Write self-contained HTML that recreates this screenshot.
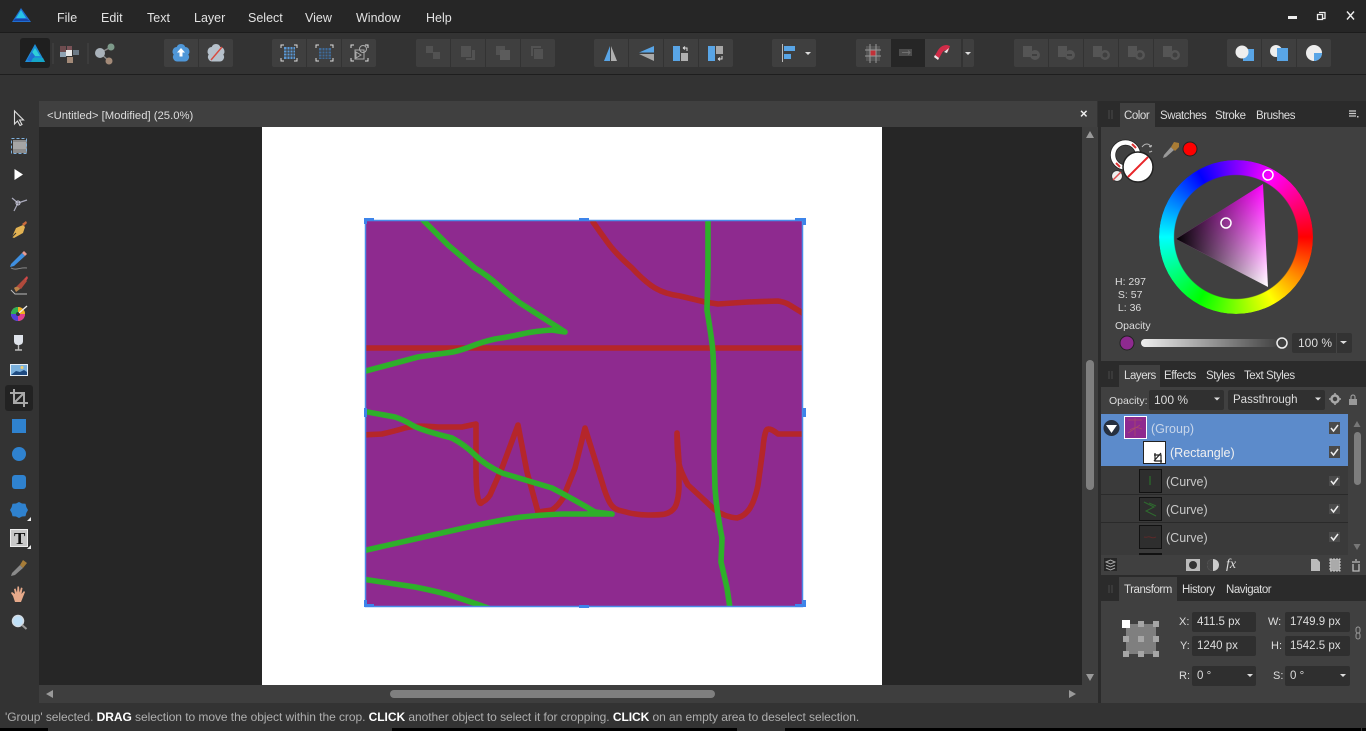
<!DOCTYPE html>
<html><head><meta charset="utf-8"><title>Affinity</title>
<style>
*{box-sizing:border-box}
html,body{margin:0;padding:0;width:1366px;height:731px;overflow:hidden;background:#333;font-family:"Liberation Sans",sans-serif}
.b{position:absolute}
.t{position:absolute;white-space:nowrap;font-size:12px;line-height:14px;color:#ddd}
.p{font-size:11.5px;letter-spacing:-.45px;margin-top:1px}
.m{font-size:12.5px;color:#e2e2e2;top:11px}
.g{position:absolute;top:39px;height:28px;background:#3f3f3f;border-radius:2px}
.f{position:absolute;background:#2f2f2f;border-radius:2px;height:20px;color:#ddd;font-size:12px;line-height:20px;padding-left:5px;white-space:nowrap}
.s{font-size:11.5px;line-height:21px}
svg{position:absolute;left:0;top:0}
</style></head><body>
<div class="b" style="left:0;top:0;width:1366px;height:33px;background:#262626;border-bottom:1px solid #1c1c1c"></div>
<div class="b" style="left:0;top:33px;width:1366px;height:42px;background:#333;border-bottom:1px solid #1e1e1e"></div>
<div class="b" style="left:0;top:75px;width:1366px;height:26px;background:#333"></div>

<div class="t m" style="left:57px">File</div>
<div class="t m" style="left:101px">Edit</div>
<div class="t m" style="left:147px">Text</div>
<div class="t m" style="left:194px">Layer</div>
<div class="t m" style="left:248px">Select</div>
<div class="t m" style="left:305px">View</div>
<div class="t m" style="left:356px">Window</div>
<div class="t m" style="left:426px">Help</div>

<div class="b" style="left:20px;top:38px;width:30px;height:30px;background:#1f1f1f;border-radius:3px"></div>
<div class="g" style="left:164px;width:69px"></div>
<div class="g" style="left:272px;width:104px"></div>
<div class="g" style="left:416px;width:139px"></div>
<div class="g" style="left:594px;width:139px"></div>
<div class="g" style="left:772px;width:44px"></div>
<div class="g" style="left:856px;width:118px"></div>
<div class="b" style="left:891px;top:39px;width:34px;height:28px;background:#262626"></div>
<div class="g" style="left:1014px;width:174px"></div>
<div class="g" style="left:1227px;width:104px"></div>

<!-- document tab -->
<div class="b" style="left:39px;top:101px;width:1058px;height:26px;background:#404040"></div>
<div class="t" style="left:47px;top:109px;font-size:11.3px;color:#ddd">&lt;Untitled&gt; [Modified] (25.0%)</div>
<div class="t" style="left:1080px;top:107px;font-size:13px;font-weight:bold;color:#eee">×</div>

<!-- canvas -->
<div class="b" style="left:39px;top:127px;width:1043px;height:558px;background:#262626"></div>
<div class="b" style="left:262px;top:127px;width:620px;height:558px;background:#fff"></div>
<div class="b" style="left:1082px;top:127px;width:16px;height:558px;background:#3e3e3e"></div>
<div class="b" style="left:1086px;top:360px;width:8px;height:130px;background:#7f7f7f;border-radius:4px"></div>
<div class="b" style="left:39px;top:685px;width:1059px;height:18px;background:#3e3e3e"></div>
<div class="b" style="left:390px;top:690px;width:325px;height:8px;background:#7f7f7f;border-radius:4px"></div>
<div class="b" style="left:1098px;top:101px;width:3px;height:602px;background:#2b2b2b"></div>

<!-- artwork -->
<svg width="1366" height="731" viewBox="0 0 1366 731" fill="none">
<defs><clipPath id="c"><rect x="366" y="221" width="436" height="385"/></clipPath>
<filter id="s" x="-5%" y="-5%" width="110%" height="110%"><feGaussianBlur stdDeviation=".3"/></filter></defs>
<rect x="366" y="221" width="436" height="385" fill="#8e2a8f"/>
<g clip-path="url(#c)"><g filter="url(#s)" stroke-width="5.6" stroke-linecap="round" stroke-linejoin="round">
<g stroke="#b5252a">
<path d="M362 348H806"/>
<path d="M593 222Q600 232 608 243T632 268Q645 282 655 288T680 296L705 302 718 304 748 302 778 301Q784 302 788 304L806 315"/>
<path d="M362 435L382 434Q395 431 405 428T438 427H462L476 424 476 465Q476 490 478 498T482 502Q486 501 490 495L502 468 518 425 527 472 538 512 552 510Q558 506 563 498L575 468 585 428 602 482Q606 496 610 503T622 511Q635 515 648 515T665 514Q672 512 675 507T679 488V462L677 433Q677 447 678 458T688 485L715 510Q725 517 737 518 745 516 750 508T758 485L763 448Q764 436 766 431T778 434H806"/>
</g>
<g stroke="#2fb02c">
<path d="M423 220L448 245 475 268Q488 276 498 285T520 303L565 332 552 330Q535 331 522 334T495 339Q482 342 472 346T453 352L418 357 392 364 362 372"/>
<path d="M708 220V267L707 310Q710 328 712 343T714 397V448L715 488Q716 502 718 515T722 538L721 562Q724 575 727 588L730 608"/>
<path d="M362 411L395 417Q404 420 412 425T452 438Q465 445 475 455T502 473L552 488Q575 500 595 512L612 514H562Q540 515 522 517T455 530L362 551"/>
<path d="M362 579L415 587Q430 590 442 593T488 608"/>
</g>
</g></g>
<rect x="365.5" y="220.5" width="437" height="386" stroke="#4a8ce8" stroke-width="1.5"/>
<g fill="#3d84ea">
<path d="M364 218h10v3h-7v3h-3zM795 218h11v7h-3v-4h-8zM364 600h3v4h7v3h-10zM803 600h3v7h-11v-3h8z"/>
<rect x="579" y="218" width="10" height="3"/><rect x="579" y="605" width="10" height="3"/>
<rect x="364" y="408" width="3" height="9"/><rect x="803" y="408" width="3" height="9"/>
</g>

<!-- scroll arrows -->
<path d="M1090 131l4 7h-8zM1090 681l4-7h-8zM46 694l7-4v8zM1076 694l-7-4v8z" fill="#9a9a9a"/>

<!-- logo -->
<path d="M21 8L31 22H12Z" fill="#1f6fd0"/><path d="M21 10L26 18H16Z" fill="#27c3e6"/><path d="M15 19L27 19 30 21H13Z" fill="#1745a8"/>
<path d="M35 44L45 62H25Z" fill="#1d8fd8"/><path d="M35 48L40 56H30Z" fill="#2fd0d8"/><path d="M27 60L32 52 35 56 31 62Z" fill="#1f6ed0"/><path d="M33 58H43L45 62H31Z" fill="#15a6c8"/>
<!-- window controls -->
<rect x="1288" y="16" width="9" height="3" fill="#eee"/>
<path d="M1319 12.5h6v6h-2.5M1317.500 14.500h5v5h-5z" stroke="#eee" stroke-width="1.3"/>
<path d="M1347 11.500l7 8M1354 11.500l-7 8" stroke="#eee" stroke-width="1.4"/>

<!-- persona icons -->
<g>
<rect x="60" y="46" width="6" height="6" fill="#6d4c4f"/><rect x="67" y="46" width="5" height="6" fill="#7a5257"/><rect x="60" y="52" width="6" height="5" fill="#8fa3b3"/><rect x="66" y="50" width="6" height="6" fill="#e8e8e8"/><rect x="73" y="50" width="6" height="5" fill="#6c7a86"/><rect x="67" y="57" width="6" height="6" fill="#a38a78"/>
<path d="M100 53L111 47M100 53L109 61" stroke="#8a8a8a" stroke-width="1.4"/>
<circle cx="100" cy="53" r="5" fill="#a9b2ba"/><circle cx="111" cy="47" r="3.500" fill="#7d9a8a"/><circle cx="109" cy="61" r="3.500" fill="#a38a78"/>
</g>
<line x1="53" y1="43" x2="53" y2="64" stroke="#444"/><line x1="88" y1="43" x2="88" y2="64" stroke="#444"/>

<!-- flower icons -->
<g>
<path d="M181 44a4.500 4.500 0 0 1 4.300 3 4.500 4.500 0 0 1 3 7.500 4.500 4.500 0 0 1-4 7h-6.600a4.500 4.500 0 0 1-4-7 4.500 4.500 0 0 1 3-7.500 4.500 4.500 0 0 1 4.300-3z" fill="#4f97d8"/>
<path d="M181 48l4 4.500h-2.500v4h-3v-4h-2.500z" fill="#fff"/>
<path d="M216 44a4.500 4.500 0 0 1 4.300 3 4.500 4.500 0 0 1 3 7.500 4.500 4.500 0 0 1-4 7h-6.600a4.500 4.500 0 0 1-4-7 4.500 4.500 0 0 1 3-7.500 4.500 4.500 0 0 1 4.300-3z" fill="#b6c1cb"/>
<path d="M211 60l11-13" stroke="#d84a3e" stroke-width="1.400"/>
</g>
<g stroke="#333"><line x1="198.500" y1="39" x2="198.500" y2="67"/><line x1="306.500" y1="39" x2="306.500" y2="67"/><line x1="341.500" y1="39" x2="341.500" y2="67"/>
<line x1="450.500" y1="39" x2="450.500" y2="67"/><line x1="485.500" y1="39" x2="485.500" y2="67"/><line x1="520.500" y1="39" x2="520.500" y2="67"/>
<line x1="628.500" y1="39" x2="628.500" y2="67"/><line x1="663.500" y1="39" x2="663.500" y2="67"/><line x1="698.500" y1="39" x2="698.500" y2="67"/>
<line x1="961.500" y1="39" x2="961.500" y2="67"/>
<line x1="1048.500" y1="39" x2="1048.500" y2="67"/><line x1="1083.500" y1="39" x2="1083.500" y2="67"/><line x1="1118.500" y1="39" x2="1118.500" y2="67"/><line x1="1153.500" y1="39" x2="1153.500" y2="67"/>
<line x1="1261.500" y1="39" x2="1261.500" y2="67"/><line x1="1296.500" y1="39" x2="1296.500" y2="67"/></g>

<!-- selection icons -->
<g stroke="#ddd" stroke-width="1">
<path d="M281 48v-3h3M294 45h3v3M297 58v3h-3M284 61h-3v-3M316 48v-3h3M330 45h3v3M333 58v3h-3M319 61h-3v-3M351 48v-3h3M365 45h3v3M368 58v3h-3M354 61h-3v-3"/>
</g>
<rect x="284" y="47" width="11" height="12" fill="#5a9ad8"/>
<g stroke="#3f3f3f"><path d="M287 47v12M290 47v12M293 47v12M284 50h11M284 53h11M284 56h11"/></g>
<rect x="319" y="48" width="12" height="11" fill="#3f6b9a"/>
<g stroke="#3f3f3f"><path d="M322 48v11M325 48v11M328 48v11M319 51h12M319 54h12M319 57h12"/></g>
<g stroke="#aaa"><rect x="355" y="50" width="9" height="9"/><circle cx="363" cy="49" r="3.500"/><path d="M356 52l5 3-5 3z"/></g>

<!-- disabled arrange -->
<g fill="#525252">
<rect x="426" y="46" width="7" height="7"/><rect x="433" y="52" width="7" height="7"/>
<rect x="461" y="46" width="10" height="11"/><path d="M472 50h3v10h-9v-2h6z"/>
<rect x="496" y="46" width="9" height="9"/><rect x="500" y="50" width="10" height="10" fill="#5c5c5c"/>
<path d="M531 46h10v2h-8v8h-2z"/><rect x="534" y="49" width="9" height="10"/>
</g>

<!-- flip icons -->
<path d="M610 46L604 61H610Z" fill="#59a5e6"/><path d="M611 46L617 61H611Z" fill="#b0b0b0"/>
<path d="M654 46L639 52.500H654Z" fill="#59a5e6"/><path d="M654 54L639 54 654 61Z" fill="#a8a8a8"/>
<rect x="673" y="46" width="7" height="15" fill="#59a5e6"/><rect x="681" y="53" width="7" height="8" fill="#b0b0b0"/><path d="M683 48h4v3M683 48l2-1.500M683 48l2 1.500" stroke="#ddd"/>
<rect x="708" y="46" width="7" height="15" fill="#59a5e6"/><rect x="716" y="46" width="7" height="8" fill="#a8a8a8"/><path d="M722 56v3h-4M718 59l2-1.500M718 59l2 1.500" stroke="#ddd"/>

<!-- align -->
<path d="M782.500 44v18" stroke="#bbb"/><rect x="784" y="46" width="11" height="5" fill="#59a5e6"/><rect x="784" y="54" width="7" height="5" fill="#59a5e6"/>
<path d="M805 52h6l-3 3zM965 52h6l-3 3z" fill="#ddd"/>

<!-- snap -->
<g><rect x="866" y="46" width="14" height="15" fill="#555"/><rect x="870" y="50" width="6" height="6" fill="#c23037"/><path d="M870 44v19M876 44v19M865 50h16M865 56h16" stroke="#999"/></g>
<path d="M899 49h13v7h-13z" fill="#4d4d4d"/><path d="M902 52.500h8M908 50.500l2 2-2 2" stroke="#707070"/>
<path d="M947 45c-5 0-8 3-10 7l-3 5 4 3 4-7c1-2 3-3 5-3l1 2 2-6z" fill="#d12c48"/><path d="M949 48l-2 5-3-1zM935 55l4 3-1 2-4-3z" fill="#e8e8e8"/>
<rect x="962" y="39" width="1" height="28" fill="#333"/>

<!-- boolean disabled -->
<g fill="#555"><rect x="1023" y="46" width="9" height="11"/><circle cx="1035" cy="55" r="5"/><rect x="1058" y="46" width="9" height="11"/><circle cx="1070" cy="55" r="5"/><rect x="1093" y="46" width="9" height="11"/><circle cx="1105" cy="55" r="5"/><rect x="1128" y="46" width="9" height="11"/><circle cx="1140" cy="55" r="5"/><rect x="1163" y="46" width="9" height="11"/><circle cx="1175" cy="55" r="5"/></g>
<g fill="#3f3f3f"><rect x="1032" y="54" width="5" height="2"/><rect x="1067" y="54" width="5" height="2"/><circle cx="1105" cy="55" r="2.500"/><circle cx="1140" cy="55" r="2.500"/><circle cx="1175" cy="55" r="2.500"/></g>

<!-- last group -->
<rect x="1243" y="49" width="11" height="12" fill="#59a5e6"/><circle cx="1242" cy="52" r="6.500" fill="#eee"/>
<circle cx="1276" cy="51" r="6" fill="#eee"/><rect x="1277" y="48" width="11" height="13" fill="#59a5e6"/>
<circle cx="1314" cy="53" r="8" fill="#eee"/><path d="M1314 53h8a8 8 0 0 1-8 8z" fill="#59a5e6"/>

<!-- tools -->
<path d="M14.500 111l0 13 3-3 2.500 4.500 2-1-2.500-4.500h4z" stroke="#ddd" stroke-width="1.100" fill="#333"/>
<rect x="13" y="140" width="14" height="13" fill="#8b8b8b"/><rect x="11.500" y="138.500" width="15" height="15" stroke="#7fb0dc" stroke-dasharray="3 2"/><rect x="13" y="142" width="13" height="7" fill="#a5a5a5"/>
<path d="M14.500 169l0 11 8.500-5.500z" fill="#fff"/>
<path d="M18 203l-6-5M18 203l9-3M18 203l-4 8" stroke="#aab" stroke-width="1.200"/><circle cx="18" cy="203" r="2" stroke="#ccd"/>
<path d="M12 237l4-9 7-3 2 2-2 6-9 5z" fill="#e2b252"/><path d="M22 224l4-3 1 2-3 3z" fill="#c96a3c"/><path d="M11 238l5-5" stroke="#333"/>
<path d="M11 264l11-11 3 3-11 10-4 1z" fill="#3f8fe0"/><path d="M22 253l2-2 3 3-2 2z" fill="#e89a90"/><path d="M11 268c5 3 9-1 16 0" stroke="#888"/>
<path d="M16 287l8-8 3 2-6 8z" fill="#b04a3c"/><path d="M14 288c2-2 5-1 6 1l-4 3z" fill="#b9834a"/><path d="M11 290l4 4h12" stroke="#bbb"/><path d="M24 279l3-3 1 2-2 3z" fill="#d04848"/>
<circle cx="18" cy="314" r="7" fill="#c9a"/><path d="M18 314V307A7 7 0 0 1 25 314Z" fill="#f0b020"/><path d="M18 314H25A7 7 0 0 1 18 321Z" fill="#e0408c"/><path d="M18 314V321A7 7 0 0 1 11 314Z" fill="#5040d8"/><path d="M18 314H11A7 7 0 0 1 18 307Z" fill="#30b050"/><circle cx="18" cy="314" r="2" fill="#333"/><path d="M19 313l8-7" stroke="#eee" stroke-width="1.300"/>
<path d="M14 335h9v6c0 3-2 4-4.500 4s-4.500-1-4.500-4z" fill="#dfe3ea"/><path d="M18.500 345v5M15 350h7" stroke="#bbb" stroke-width="1.400"/>
<rect x="10" y="364" width="18" height="12" fill="#e5eef6"/><rect x="11" y="365" width="16" height="10" fill="#7ab0dc"/><path d="M11 375l5-4 4 1 4-2 3 2v3z" fill="#1e4a80"/><circle cx="22" cy="367.500" r="1.500" fill="#f2d070"/>
<rect x="5" y="385" width="28" height="26" rx="3" fill="#222"/>
<path d="M14 389v14h14M10 393h14v14M24 393L14 403" stroke="#a8a8a8" stroke-width="2"/>
<rect x="12" y="419" width="14" height="14" fill="#2f82cf"/>
<circle cx="19" cy="454" r="7" fill="#2f82cf"/>
<rect x="12" y="475" width="14" height="14" rx="3" fill="#2f82cf"/>
<path d="M19 502l3 1.500 3.500.3.800 3.200 1.700 3-1.700 3-.8 3.200-3.500.3-3 1.500-3-1.500-3.500-.3-.8-3.200-1.700-3 1.700-3 .8-3.200 3.500-.3z" fill="#2f82cf"/>
<path d="M31 517v4h-4zM31 545v4h-4z" fill="#eee"/>
<rect x="10.500" y="529.500" width="17" height="17" fill="#c8c8c8" stroke="#eee"/>
<path d="M12 573l8-8 3 3-8 7-4 1z" fill="#8a8a8a"/><path d="M20 565l3-5 4 3-4 5z" fill="#a67c38"/>
<g transform="translate(0 4)"><path d="M13 592l-2-3 1-1 3 2-1-5 1.500-.5 1.500 4 .5-6h1.500l.5 6 1.500-5 1.500.5-1 6 2.500-3 1 1-2 5-2 5h-6z" fill="#e6a98a"/></g>
<circle cx="18" cy="621" r="5.500" fill="#bfe0f8" stroke="#d4dce4" stroke-width="1.500"/><path d="M22 625l4.500 4" stroke="#999" stroke-width="2"/>
</svg>

<div class="t" style="left:14px;top:530px;width:10px;font:bold 17px/17px 'Liberation Serif',serif;color:#111">T</div>

<!-- right panels -->
<div class="b" style="left:1101px;top:101px;width:265px;height:26px;background:#2b2b2b"></div>
<div class="b" style="left:1120px;top:103px;width:35px;height:24px;background:#404040"></div>
<div class="b" style="left:1101px;top:127px;width:265px;height:234px;background:#404040"></div>
<div class="b" style="left:1101px;top:361px;width:265px;height:3px;background:#2b2b2b"></div>
<div class="t p" style="left:1124px;top:108px">Color</div>
<div class="t p" style="left:1160px;top:108px">Swatches</div>
<div class="t p" style="left:1215px;top:108px">Stroke</div>
<div class="t p" style="left:1256px;top:108px">Brushes</div>

<!-- wheel -->
<div class="b" style="left:1159px;top:160px;width:154px;height:154px;border-radius:50%;background:conic-gradient(from 90deg,#f00,#ff0,#0f0,#0ff,#00f,#f0f,#f00);-webkit-mask:radial-gradient(circle,transparent 61.500px,#000 62.500px);mask:radial-gradient(circle,transparent 61.500px,#000 62.500px)"></div>

<div class="t" style="left:1115px;top:276px;font-size:10.500px;line-height:13px;color:#ddd">H: 297<br>&nbsp;S: 57<br>&nbsp;L: 36</div>
<div class="t" style="left:1115px;top:319px;font-size:10.500px;color:#ddd">Opacity</div>
<div class="f" style="left:1292px;top:333px;width:60px;padding-left:6px;background:#333">100 %</div>
<div class="b" style="left:1336px;top:333px;width:1px;height:20px;background:#444"></div>

<svg width="1366" height="731" viewBox="0 0 1366 731" fill="none">
<defs>
<linearGradient id="w" gradientUnits="userSpaceOnUse" x1="1263" y1="184" x2="1268" y2="287"><stop offset="0" stop-color="#f0f"/><stop offset="1" stop-color="#fff"/></linearGradient>
<linearGradient id="k" gradientUnits="userSpaceOnUse" x1="1176" y1="239" x2="1265" y2="236"><stop offset="0" stop-color="#000"/><stop offset="1" stop-color="#000" stop-opacity="0"/></linearGradient>
<linearGradient id="op" x1="0" x2="1"><stop offset="0" stop-color="#eee"/><stop offset="1" stop-color="#444"/></linearGradient>
</defs>
<path d="M1263 184L1176 239 1268 287Z" fill="url(#w)"/><path d="M1263 184L1176 239 1268 287Z" fill="url(#k)"/>
<circle cx="1268" cy="175" r="5" stroke="#fff" stroke-width="1.500"/>
<circle cx="1226" cy="223" r="5" stroke="#fff" stroke-width="1.500"/>

<!-- color swatch -->
<circle cx="1125.500" cy="155" r="12.500" stroke="#222" stroke-width="6"/><circle cx="1125.500" cy="155" r="12.500" stroke="#fff" stroke-width="4.500"/>
<path d="M1132 144l4 4M1116 163l4 4" stroke="#d33" stroke-width="2"/>
<circle cx="1138" cy="167" r="15" fill="#fff" stroke="#222" stroke-width="1.500"/><path d="M1128 177l20-20" stroke="#e8262a" stroke-width="2"/>
<circle cx="1117" cy="176" r="5.500" fill="#eee" stroke="#333"/><path d="M1113 180l8-8" stroke="#e05050" stroke-width="1.500"/>
<path d="M1142 147c3-4 7-4 9 0M1151 147l-2-.5M1151 147l.5-2M1152 151c-1 1-2 1-3 1" stroke="#bbb"/>
<path d="M1164 155l7-8 3 3-8 7-3 1z" fill="#999"/><path d="M1171 147l3-5 5 1 0 4-4 4z" fill="#a97c35"/>
<circle cx="1190" cy="149" r="7" fill="#f00" stroke="#222"/>

<!-- opacity -->
<rect x="1141" y="339" width="136" height="8" rx="4" fill="url(#op)"/>
<circle cx="1282" cy="343" r="5" fill="#404040" stroke="#eee" stroke-width="1.500"/>
<circle cx="1127" cy="343" r="7" fill="#8e2a8f" stroke="#222"/>
<path d="M1340 341h7l-3.500 3z" fill="#ddd"/>
<path d="M1349 111h7M1349 113.500h7M1349 116h7" stroke="#ccc" stroke-width="1.200"/><rect x="1357" y="116" width="1.500" height="1.500" fill="#ccc"/>
<g stroke="#4a4a4a"><path d="M1109 110v9M1112 110v9"/></g>
</svg>

<!-- layers -->
<div class="b" style="left:1101px;top:364px;width:265px;height:23px;background:#2b2b2b"></div>
<div class="b" style="left:1119px;top:365px;width:41px;height:22px;background:#404040"></div>
<div class="t p" style="left:1124px;top:368px">Layers</div>
<div class="t p" style="left:1164px;top:368px">Effects</div>
<div class="t p" style="left:1206px;top:368px">Styles</div>
<div class="t p" style="left:1244px;top:368px">Text Styles</div>
<div class="b" style="left:1101px;top:387px;width:265px;height:27px;background:#404040"></div>
<div class="t" style="left:1109px;top:394px;font-size:10.500px;color:#ddd">Opacity:</div>
<div class="f" style="left:1149px;top:390px;width:75px;background:#303030">100 %</div>
<div class="f s" style="left:1228px;top:390px;width:97px;background:#303030">Passthrough</div>

<div class="b" style="left:1101px;top:414px;width:247px;height:52px;background:#5c8bcb"></div>
<div class="b" style="left:1101px;top:466px;width:247px;height:89px;background:#3a3a3a"></div>
<div class="b" style="left:1348px;top:414px;width:18px;height:141px;background:#404040"></div>
<div class="b" style="left:1354px;top:432px;width:7px;height:53px;background:#7d7d7d;border-radius:4px"></div>
<div class="b" style="left:1101px;top:494px;width:247px;height:1px;background:#2a2a2a"></div>
<div class="b" style="left:1101px;top:522px;width:247px;height:1px;background:#2a2a2a"></div>
<div class="b" style="left:1101px;top:555px;width:265px;height:20px;background:#404040"></div>
<div class="b" style="left:1101px;top:575px;width:265px;height:2px;background:#2b2b2b"></div>

<div class="b" style="left:1124px;top:416px;width:23px;height:23px;background:#8e2a8f;border:1px solid #fff"></div>
<div class="b" style="left:1143px;top:441px;width:23px;height:23px;background:#fff;border:1px solid #222"></div>
<div class="b" style="left:1139px;top:469px;width:23px;height:24px;background:#2e2e2e;border:1px solid #111"></div>
<div class="b" style="left:1139px;top:497px;width:23px;height:24px;background:#2e2e2e;border:1px solid #111"></div>
<div class="b" style="left:1139px;top:525px;width:23px;height:24px;background:#2e2e2e;border:1px solid #111"></div>
<div class="b" style="left:1139px;top:553px;width:23px;height:2px;background:#111"></div>

<div class="t" style="left:1151px;top:422px;font-size:12.500px;color:#c8d6ea">(Group)</div>
<div class="t" style="left:1170px;top:446px;font-size:12.500px;color:#f0f0f0">(Rectangle)</div>
<div class="t" style="left:1166px;top:475px;font-size:12.500px;color:#c8c8c8">(Curve)</div>
<div class="t" style="left:1166px;top:503px;font-size:12.500px;color:#c8c8c8">(Curve)</div>
<div class="t" style="left:1166px;top:531px;font-size:12.500px;color:#c8c8c8">(Curve)</div>

<svg width="1366" height="731" viewBox="0 0 1366 731" fill="none">
<g stroke="#4a4a4a"><path d="M1109 371v8M1112 371v8"/></g>
<circle cx="1111.500" cy="428" r="8" fill="#263040"/><path d="M1106 425h11l-5.500 8z" fill="#fff"/>
<path d="M1128 420h14M1130 430c4-3 8-3 12-1M1135 418v18M1128 433l12-8" stroke="#a9486b" stroke-width=".8"/>
<path d="M1155 453v8h7M1154 455h7v8M1161 453l-7 8" stroke="#222" stroke-width="1.200"/>
<path d="M1150 476v9" stroke="#2a7a2a"/><path d="M1144 502l10 5-8 4 10 5M1149 503l7 3" stroke="#2f6a2f"/><path d="M1144 537c3 1 4-1 6 0s4 1 6 0" stroke="#5a2a2a"/>
<g>
<rect x="1329" y="422" width="11" height="12" fill="#4a4a4a"/><rect x="1329" y="446" width="11" height="12" fill="#4a4a4a"/>
<rect x="1329" y="476" width="11" height="10" fill="#4b4b4b"/><rect x="1329" y="504" width="11" height="10" fill="#4b4b4b"/><rect x="1329" y="532" width="11" height="10" fill="#4b4b4b"/>
<path d="M1331 428l2.500 3 4.500-6M1331 452l2.500 3 4.500-6M1331 481l2.500 3 4.500-6M1331 509l2.500 3 4.500-6M1331 537l2.500 3 4.500-6" stroke="#eee" stroke-width="1.500"/>
</g>
<path d="M1357 421l3.500 6h-7zM1357 550l3.500-6h-7z" fill="#777"/>
<path d="M1214 397.500h6l-3 3zM1315 397.500h6l-3 3z" fill="#ddd"/>
<circle cx="1335" cy="399" r="3.500" stroke="#aaa" stroke-width="2.500"/><path d="M1335 393v2M1335 403v2M1329 399h2M1339 399h2" stroke="#aaa" stroke-width="1.500"/>
<rect x="1349" y="399" width="8" height="6" fill="#999"/><path d="M1351 399v-2a2 2 0 0 1 4 0v2" stroke="#999" stroke-width="1.200"/>
<!-- layers footer -->
<rect x="1104" y="558" width="13" height="13" fill="#262626"/><path d="M1106 562l4.500-2 4.500 2-4.500 2zM1106 565l4.500 2 4.500-2M1106 568l4.500 2 4.500-2" stroke="#a8a8a8"/>
<rect x="1186" y="559" width="14" height="12" fill="#bbb"/><circle cx="1193" cy="565" r="4" fill="#333"/>
<circle cx="1213" cy="565" r="6" fill="#ccc"/><path d="M1213 559a6 6 0 0 0 0 12z" fill="#444"/>
<path d="M1311 559h6l3 3v9h-9z" fill="#bbb"/><path d="M1330 559h10v12h-10z" fill="#aaa" stroke="#ccc" stroke-dasharray="2 1"/>
<path d="M1352 562h8M1353 564v7h6v-7M1355 560h2" stroke="#bbb" stroke-width="1.300"/>
</svg>
<div class="t" style="left:1226px;top:558px;font:italic 14px/14px 'Liberation Serif',serif;color:#ddd">fx</div>

<!-- transform -->
<div class="b" style="left:1101px;top:577px;width:265px;height:24px;background:#2b2b2b"></div>
<div class="b" style="left:1119px;top:577px;width:58px;height:24px;background:#404040"></div>
<div class="b" style="left:1101px;top:601px;width:265px;height:102px;background:#404040"></div>
<div class="t p" style="left:1124px;top:582px">Transform</div>
<div class="t p" style="left:1182px;top:582px">History</div>
<div class="t p" style="left:1226px;top:582px">Navigator</div>
<div class="t" style="left:1179px;top:615px;font-size:11px">X:</div><div class="f s" style="left:1192px;top:612px;width:64px">411.5 px</div>
<div class="t" style="left:1268px;top:615px;font-size:11px">W:</div><div class="f s" style="left:1285px;top:612px;width:65px">1749.9 px</div>
<div class="t" style="left:1180px;top:639px;font-size:11px">Y:</div><div class="f s" style="left:1192px;top:636px;width:64px">1240 px</div>
<div class="t" style="left:1271px;top:639px;font-size:11px">H:</div><div class="f s" style="left:1285px;top:636px;width:65px">1542.5 px</div>
<div class="t" style="left:1179px;top:669px;font-size:11px">R:</div><div class="f s" style="left:1192px;top:666px;width:64px">0 °</div>
<div class="t" style="left:1273px;top:669px;font-size:11px">S:</div><div class="f s" style="left:1285px;top:666px;width:65px">0 °</div>
<svg width="1366" height="731" viewBox="0 0 1366 731" fill="none">
<path d="M1247 674h6l-3 3zM1340 674h6l-3 3z" fill="#ddd"/>
<g stroke="#4a4a4a"><path d="M1109 585v8M1112 585v8"/></g>
<!-- transform anchor -->
<rect x="1126" y="624" width="30" height="30" fill="#7f7f7f"/>
<g fill="#a6a6a6"><rect x="1138" y="621" width="6" height="6"/><rect x="1153" y="621" width="6" height="6"/><rect x="1123" y="636" width="6" height="6"/><rect x="1138" y="636" width="6" height="6"/><rect x="1153" y="636" width="6" height="6"/><rect x="1123" y="651" width="6" height="6"/><rect x="1138" y="651" width="6" height="6"/><rect x="1153" y="651" width="6" height="6"/></g>
<rect x="1122" y="620" width="8" height="8" fill="#fff"/>
<rect x="1356" y="627" width="4" height="6" rx="2" stroke="#999"/><rect x="1356" y="633" width="4" height="6" rx="2" stroke="#999"/>
</svg>

<!-- status -->
<div class="b" style="left:0;top:703px;width:1366px;height:25px;background:#333"></div>
<div class="t" style="left:5px;top:710px;font-size:12px;color:#aeaeae;letter-spacing:-.055px">'Group' selected. <b style="color:#fff">DRAG</b> selection to move the object within the crop. <b style="color:#fff">CLICK</b> another object to select it for cropping. <b style="color:#fff">CLICK</b> on an empty area to deselect selection.</div>
<div class="b" style="left:0;top:728px;width:48px;height:3px;background:#000"></div>
<div class="b" style="left:392px;top:728px;width:345px;height:3px;background:#000"></div>
<div class="b" style="left:785px;top:728px;width:576px;height:3px;background:#000"></div>
<div class="b" style="left:1362px;top:728px;width:4px;height:3px;background:#000"></div>
</body></html>
